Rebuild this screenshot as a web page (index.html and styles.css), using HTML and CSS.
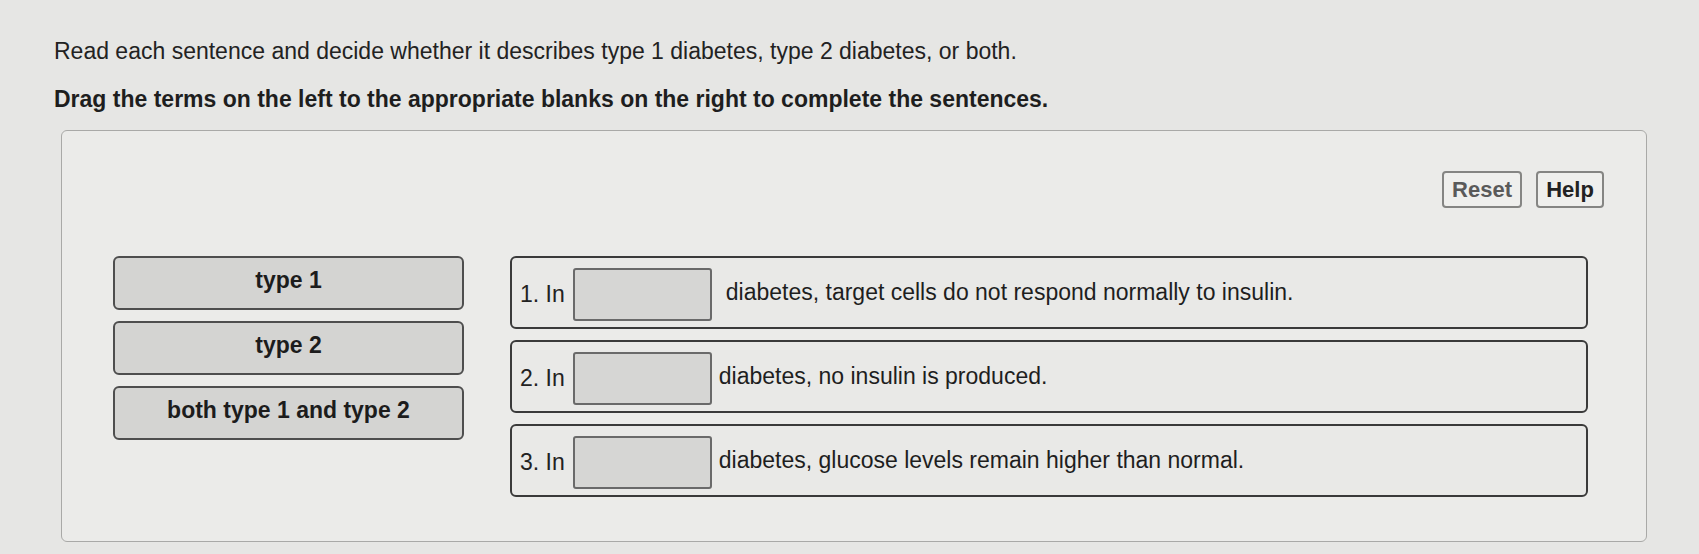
FILE: index.html
```html
<!DOCTYPE html>
<html>
<head>
<meta charset="utf-8">
<link rel="stylesheet" href="styles.css">
</head>
<body>
<div class="page">
  <p class="intro">Read each sentence and decide whether it describes type 1 diabetes, type 2 diabetes, or both.</p>
  <p class="instr">Drag the terms on the left to the appropriate blanks on the right to complete the sentences.</p>
  <div class="panel">
    <div class="toolbar">
      <button class="btn reset">Reset</button>
      <button class="btn help">Help</button>
    </div>
    <div class="work">
      <div class="terms">
        <div class="term">type 1</div>
        <div class="term">type 2</div>
        <div class="term">both type 1 and type 2</div>
      </div>
      <div class="sentences">
        <div class="sentence"><span class="num">1. In</span><span class="blank"></span><span class="rest first">diabetes, target cells do not respond normally to insulin.</span></div>
        <div class="sentence"><span class="num">2. In</span><span class="blank"></span><span class="rest">diabetes, no insulin is produced.</span></div>
        <div class="sentence"><span class="num">3. In</span><span class="blank"></span><span class="rest">diabetes, glucose levels remain higher than normal.</span></div>
      </div>
    </div>
  </div>
</div>
</body>
</html>
```
FILE: styles.css
```css
html, body {
  margin: 0;
  padding: 0;
}
body {
  background: #e6e6e4;
  font-family: "Liberation Sans", Arial, sans-serif;
  color: #1c1c1c;
  width: 1699px;
  height: 554px;
  overflow: hidden;
}
.page {
  padding: 37px 0 0 0;
}
.intro {
  margin: 0 0 0 54px;
  font-size: 23px;
  line-height: 28px;
  color: #222;
}
.instr {
  margin: 20px 0 0 54px;
  font-size: 23px;
  line-height: 28px;
  font-weight: bold;
  color: #1e1e1e;
}
.panel {
  margin: 17px 0 0 61px;
  width: 1586px;
  height: 412px;
  box-sizing: border-box;
  border: 1.5px solid #a9a9a7;
  border-radius: 6px;
  background: #ebebe9;
  padding: 40px 42px 0 51px;
}
.toolbar {
  display: flex;
  justify-content: flex-end;
  gap: 14px;
}
.btn {
  font-family: "Liberation Sans", Arial, sans-serif;
  font-weight: bold;
  font-size: 22px;
  height: 37px;
  padding: 0;
  border: 2px solid #858583;
  border-radius: 4px;
  background: #efefed;
}
.reset {
  width: 80px;
  color: #5a5a5a;
}
.help {
  width: 68px;
  color: #222;
}
.work {
  display: flex;
  gap: 46px;
  margin-top: 48px;
}
.terms {
  width: 351px;
  display: flex;
  flex-direction: column;
  gap: 11px;
}
.term {
  height: 54px;
  box-sizing: border-box;
  border: 2px solid #4e4e4e;
  border-radius: 6px;
  background: #d4d4d2;
  display: flex;
  align-items: center;
  justify-content: center;
  padding-bottom: 5px;
  font-weight: bold;
  font-size: 23px;
  color: #1c1c1c;
}
.sentences {
  width: 1078px;
  display: flex;
  flex-direction: column;
  gap: 11px;
}
.sentence {
  height: 73px;
  box-sizing: border-box;
  border: 2px solid #3a3a3a;
  border-radius: 6px;
  background: #e9e9e7;
  display: flex;
  align-items: center;
  padding: 4px 0 0 8px;
  font-size: 23px;
}
.num {
  color: #222;
}
.blank {
  width: 139px;
  height: 53px;
  flex: none;
  box-sizing: border-box;
  border: 2px solid #6a6a6a;
  border-radius: 3px;
  background: #d6d6d4;
  margin: 0 7px 0 8px;
}
.rest {
  color: #1e1e1e;
  padding-bottom: 4px;
}
.rest.first {
  margin-left: 7px;
}
```
